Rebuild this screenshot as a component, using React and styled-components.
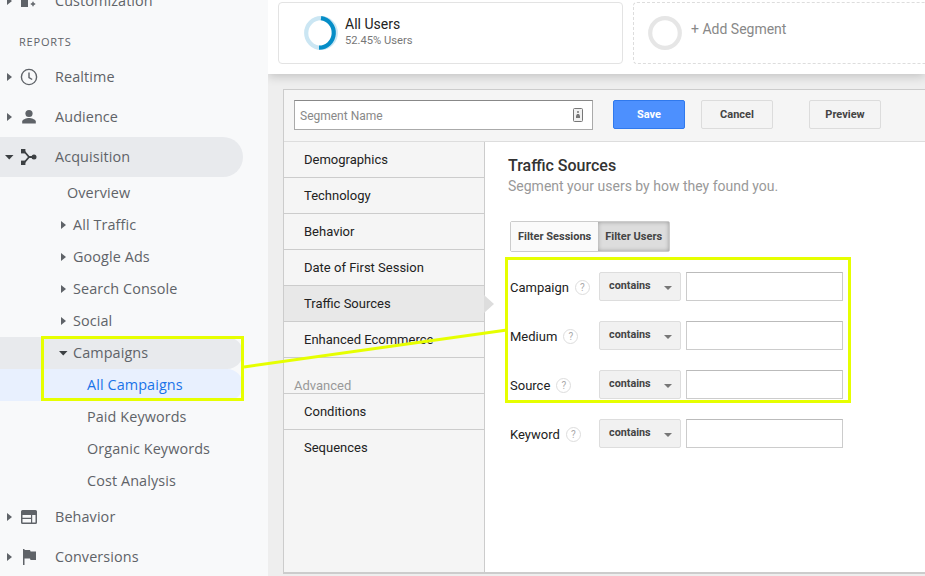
import React from 'react'
import styled, {createGlobalStyle} from 'styled-components'

const GlobalStyle = createGlobalStyle`
    html, body {
        margin: 0;
        padding: 0;
        height: 100%;
        overflow: hidden;
    }
    * {
        box-sizing: border-box;
    }
`

const Arrow = ({open}) => (
    <ArrowBox>
        <svg width="10" height="10" viewBox="0 0 10 10">
            {open
                ? <path d="M1 3h8.500L5.250 7.500z" fill="#3c4043"/>
                : <path d="M3 1l5 4-5 4z" fill="#5f6368"/>}
        </svg>
    </ArrowBox>
)

const ClockIcon = () => (
    <svg width="18" height="18" viewBox="0 0 18 18" fill="none" stroke="#5f6368" strokeWidth="1.4">
        <circle cx="9" cy="9" r="7.600"/>
        <path d="M9 4.500V9.500l3.200 2"/>
    </svg>
)

const PersonIcon = () => (
    <svg width="18" height="18" viewBox="0 0 18 18" fill="#5f6368">
        <circle cx="9" cy="5.500" r="3.600"/>
        <path d="M2.200 15.500v-2c0-2.400 4.500-3.600 6.800-3.600s6.800 1.200 6.800 3.600v2z"/>
    </svg>
)

const AcquisitionIcon = () => (
    <svg width="18" height="18" viewBox="0 0 18 18" fill="#3c4043" stroke="#3c4043" strokeWidth="1.800">
        <path d="M3.500 2.500L9 9l-5.500 6.500M9 9h6" fill="none"/>
        <rect x="1" y="1" width="4.400" height="4.400" strokeWidth="0"/>
        <rect x="1" y="12.600" width="4.400" height="4.400" strokeWidth="0"/>
        <circle cx="14" cy="9" r="2.500" strokeWidth="0"/>
    </svg>
)

const BehaviorIcon = () => (
    <svg width="18" height="18" viewBox="0 0 18 18">
        <path d="M2.500 2h13A1.500 1.500 0 0 1 17 3.500v11a1.500 1.500 0 0 1-1.500 1.500h-13A1.500 1.500 0 0 1 1 14.500v-11A1.500 1.500 0 0 1 2.500 2zM2.500 7v2.800h8.500V7zM12.200 7v7.500h3.300V7zM2.500 11v3.500h8.500V11z" fill="#5f6368" fillRule="evenodd"/>
    </svg>
)

const FlagIcon = () => (
    <svg width="18" height="18" viewBox="0 0 18 18" fill="#5f6368">
        <path d="M3 1h1.500v16H3zM4.500 2h5.500l.6 1.500H16v8.500H10.500L10 10.500H4.500z"/>
    </svg>
)

const CustomizationIcon = () => (
    <svg width="18" height="18" viewBox="0 0 18 18" fill="#5f6368">
        <rect x="1" y="8" width="7" height="7"/>
        <path d="M12.300 11.300v-1.500h1.400v1.500h1.500v1.400h-1.500v1.500h-1.400v-1.500h-1.500v-1.400z"/>
    </svg>
)

const DonutIcon = ({empty}) => (
    <svg width="34" height="34" viewBox="0 0 34 34" fill="none">
        <circle cx="17" cy="17" r="14.800" strokeWidth="4.200" stroke={empty ? '#e6e6e6' : '#cbe6f3'}/>
        {!empty && <path d="M17 2.200A14.800 14.800 0 0 1 15 31.660" strokeWidth="4.200" stroke="#058dc7"/>}
    </svg>
)

const mainItems = [
    {label: 'Overview', noArrow: true},
    {label: 'All Traffic'},
    {label: 'Google Ads'},
    {label: 'Search Console'},
    {label: 'Social'},
]

const campaignItems = ['Paid Keywords', 'Organic Keywords', 'Cost Analysis']

const filterRows = ['Campaign', 'Medium', 'Source', 'Keyword']

const menuTop = ['Demographics', 'Technology', 'Behavior', 'Date of First Session']

const App = () => {
    return(
        <Page>
            <GlobalStyle/>
            <Sidebar>
                <TopRow><Arrow/><IconSlot><CustomizationIcon/></IconSlot><RowLabel>Customization</RowLabel></TopRow>
                <SectionTitle>REPORTS</SectionTitle>
                <TopRow><Arrow/><IconSlot><ClockIcon/></IconSlot><RowLabel>Realtime</RowLabel></TopRow>
                <TopRow><Arrow/><IconSlot><PersonIcon/></IconSlot><RowLabel>Audience</RowLabel></TopRow>
                <TopRow active><Arrow open/><IconSlot><AcquisitionIcon/></IconSlot><RowLabel>Acquisition</RowLabel></TopRow>
                <SubList>
                    {mainItems.map(item => (
                        <SubRow key={item.label} plain={item.noArrow}>
                            {!item.noArrow && <Arrow/>}
                            <RowLabel>{item.label}</RowLabel>
                        </SubRow>
                    ))}
                    <SubRow open><Arrow open/><RowLabel>Campaigns</RowLabel></SubRow>
                    <LeafRow selected><RowLabel>All Campaigns</RowLabel></LeafRow>
                    {campaignItems.map(item => <LeafRow key={item}><RowLabel>{item}</RowLabel></LeafRow>)}
                </SubList>
                <TopRow><Arrow/><IconSlot><BehaviorIcon/></IconSlot><RowLabel>Behavior</RowLabel></TopRow>
                <TopRow><Arrow/><IconSlot><FlagIcon/></IconSlot><RowLabel>Conversions</RowLabel></TopRow>
            </Sidebar>
            <Main>
                <SegmentBar>
                    <SegmentCard>
                        <DonutIcon/>
                        <SegmentText>
                            <SegmentName>All Users</SegmentName>
                            <SegmentSub>52.45% Users</SegmentSub>
                        </SegmentText>
                    </SegmentCard>
                    <AddCard>
                        <DonutIcon empty/>
                        <AddLabel>+ Add Segment</AddLabel>
                    </AddCard>
                </SegmentBar>
                <Content>
                    <Panel>
                        <Toolbar>
                            <NameField>
                                <NamePlaceholder>Segment Name</NamePlaceholder>
                                <NameIcon>
                                    <svg width="10" height="14" viewBox="0 0 10 14">
                                        <rect x="0.500" y="0.500" width="9" height="13" rx="1" fill="#f1f1f1" stroke="#777"/>
                                        <path d="M5 3a1 1 0 1 1 0 2 1 1 0 0 1 0-2zM3 10V8l1-2h2l1 2v2z" fill="#777"/>
                                    </svg>
                                </NameIcon>
                            </NameField>
                            <SaveButton>Save</SaveButton>
                            <ToolButton>Cancel</ToolButton>
                            <PreviewButton>Preview</PreviewButton>
                        </Toolbar>
                        <PanelBody>
                            <Menu>
                                {menuTop.map(item => <MenuItem key={item}>{item}</MenuItem>)}
                                <MenuItem selected>Traffic Sources</MenuItem>
                                <MenuItem>Enhanced Ecommerce</MenuItem>
                                <MenuHeading>Advanced</MenuHeading>
                                <MenuItem>Conditions</MenuItem>
                                <LastMenuItem>Sequences</LastMenuItem>
                            </Menu>
                            <Form>
                                <FormTitle>Traffic Sources</FormTitle>
                                <FormSub>Segment your users by how they found you.</FormSub>
                                <Toggle>
                                    <ToggleButton>Filter Sessions</ToggleButton>
                                    <ToggleButton pressed>Filter Users</ToggleButton>
                                </Toggle>
                                <Rows>
                                    {filterRows.map(row => (
                                        <Row key={row}>
                                            <RowName>
                                                {row}
                                                <Help>?</Help>
                                            </RowName>
                                            <Select>
                                                contains
                                                <Caret/>
                                            </Select>
                                            <ValueInput/>
                                        </Row>
                                    ))}
                                </Rows>
                            </Form>
                        </PanelBody>
                    </Panel>
                </Content>
            </Main>
            <CampaignBox/>
            <FilterBox/>
            <Connector viewBox="0 0 925 576" width="925" height="576">
                <line x1="244" y1="367" x2="507" y2="330" stroke="#e6ff00" strokeWidth="3"/>
            </Connector>
        </Page>
    )
}

export default App

const sans = `"Open Sans", "Noto Sans", sans-serif`
const roboto = `Roboto, "Liberation Sans", sans-serif`

const Page = styled.div`
    position: relative;
    display: flex;
    width: 925px;
    height: 576px;
    overflow: hidden;
    background: #fff;
`

const Sidebar = styled.nav`
    flex: 0 0 268px;
    margin-top: -19px;
    background: #f8f9fa;
    font-family: ${sans};
    color: #5f6368;
`

const TopRow = styled.div`
    display: flex;
    align-items: center;
    width: 243px;
    height: 40px;
    padding-left: 4px;
    border-radius: 0 20px 20px 0;
    background: ${props => props.active ? '#e8eaed' : 'transparent'};
`

const ArrowBox = styled.span`
    display: flex;
    flex: 0 0 10px;
    align-items: center;
    justify-content: center;
`

const IconSlot = styled.span`
    display: flex;
    flex: 0 0 18px;
    margin: 0 17px 0 6px;
`

const RowLabel = styled.span`
    padding-bottom: 2px;
    font-size: 14.400px;
    font-weight: 500;
    letter-spacing: .1px;
    white-space: nowrap;
`

const SectionTitle = styled.div`
    height: 36px;
    padding: 15px 0 0 19px;
    font-size: 11px;
    font-weight: 500;
    letter-spacing: .8px;
    line-height: 12px;
`

const SubList = styled.div`
    display: flex;
    flex-direction: column;
`

const SubRow = styled.div`
    display: flex;
    align-items: center;
    gap: 5px;
    width: 243px;
    height: 32px;
    padding-left: ${props => props.plain ? '67px' : '58px'};
    border-radius: 0 16px 16px 0;
    background: ${props => props.open ? '#e8eaed' : 'transparent'};
`

const LeafRow = styled.div`
    display: flex;
    align-items: center;
    width: 243px;
    height: 32px;
    padding-left: 87px;
    border-radius: 0 16px 16px 0;
    background: ${props => props.selected ? '#e8f0fe' : 'transparent'};
    color: ${props => props.selected ? '#1a73e8' : '#5f6368'};
`

const Main = styled.div`
    display: flex;
    flex: 1;
    flex-direction: column;
    min-width: 0;
    overflow: hidden;
    font-family: ${roboto};
`

const SegmentBar = styled.div`
    position: relative;
    z-index: 1;
    display: flex;
    gap: 10px;
    flex: 0 0 74px;
    padding: 2px 0 0 10px;
    background: #fff;
    box-shadow: 0 2px 10px rgba(0, 0, 0, .2);
`

const SegmentCard = styled.div`
    display: flex;
    align-items: center;
    flex: 0 0 345px;
    gap: 7px;
    height: 62px;
    padding-left: 25px;
    border: 1px solid #e3e3e3;
    border-radius: 4px;
`

const AddCard = styled(SegmentCard)`
    flex: 1;
    padding-left: 14px;
    border: 1px dashed #ddd;
    border-right: none;
    border-radius: 4px 0 0 4px;
`

const SegmentText = styled.div`
    display: flex;
    flex-direction: column;
    margin-top: -2px;
`

const SegmentName = styled.span`
    color: #222;
    font-size: 14px;
    line-height: 17px;
`

const SegmentSub = styled.span`
    color: #777;
    font-size: 11.200px;
    line-height: 15px;
`

const AddLabel = styled.span`
    margin: -8px 0 0 2px;
    color: #888;
    font-size: 14px;
`

const Content = styled.div`
    flex: 1;
    padding: 15px 0 2px 15px;
    background: #eee;
`

const Panel = styled.div`
    display: flex;
    flex-direction: column;
    height: 100%;
    border: 1px solid #ccc;
    border-right: none;
    border-bottom-width: 2px;
    background: #f5f5f5;
`

const Toolbar = styled.div`
    display: flex;
    align-items: center;
    flex: 0 0 52px;
    padding: 0 0 2px 10px;
    border-bottom: 1px solid #ddd;
`

const NameField = styled.div`
    display: flex;
    align-items: center;
    justify-content: space-between;
    width: 299px;
    height: 30px;
    padding: 1px 9px 0 5px;
    border: 1px solid #aaa;
    border-top-color: #888;
    background: #fff;
`

const NamePlaceholder = styled.span`
    padding-top: 1px;
    color: #888;
    font-size: 12px;
`

const NameIcon = styled.span`
    display: flex;
`

const ToolButton = styled.button`
    width: 72px;
    height: 29px;
    margin-left: 16px;
    padding: 0;
    border: 1px solid #dcdcdc;
    border-radius: 2px;
    background: #f4f4f4;
    color: #444;
    font-family: ${roboto};
    font-size: 11px;
    font-weight: 700;
`

const SaveButton = styled(ToolButton)`
    margin-left: 20px;
    border-color: #3079ed;
    background: #4d90fe;
    color: #fff;
`

const PreviewButton = styled(ToolButton)`
    margin-left: 36px;
`

const PanelBody = styled.div`
    display: flex;
    flex: 1;
    min-height: 0;
`

const Menu = styled.div`
    flex: 0 0 201px;
    border-right: 1px solid #ccc;
`

const MenuItem = styled.div`
    position: relative;
    display: flex;
    align-items: center;
    height: 36px;
    padding-left: 20px;
    border-bottom: 1px solid #ccc;
    background: ${props => props.selected ? '#e8e8e8' : 'transparent'};
    color: #222;
    font-size: 13px;

    ${props => props.selected && `
        &::after {
            content: '';
            position: absolute;
            top: 9px;
            right: -10px;
            width: 0;
            height: 0;
            border-top: 9px solid transparent;
            border-bottom: 9px solid transparent;
            border-left: 10px solid #ddd;
        }
    `}
`

const LastMenuItem = styled(MenuItem)`
    border-bottom-color: transparent;
`

const MenuHeading = styled.div`
    height: 36px;
    padding: 20px 0 0 10px;
    border-bottom: 1px solid #ccc;
    color: #999;
    font-size: 13px;
    line-height: 15px;
`

const Form = styled.div`
    flex: 1;
    padding: 14px 0 0 23px;
    background: #fff;
`

const FormTitle = styled.div`
    color: #333;
    font-size: 16px;
    font-weight: 500;
    line-height: 20px;
`

const FormSub = styled.div`
    margin-top: 2px;
    color: #999;
    font-size: 14px;
    line-height: 17px;
`

const Toggle = styled.div`
    display: inline-flex;
    height: 31px;
    margin: 26px 0 0 2px;
    border: 1px solid #ccc;
    border-radius: 2px;
`

const ToggleButton = styled.div`
    display: flex;
    align-items: center;
    padding: 0 7px;
    background: ${props => props.pressed ? '#ddd' : '#fafafa'};
    box-shadow: ${props => props.pressed ? 'inset 0 0 4px rgba(0, 0, 0, .3)' : 'none'};
    color: #444;
    font-size: 11px;
    font-weight: 700;
`

const Rows = styled.div`
    display: flex;
    flex-direction: column;
    gap: 20px;
    margin-top: 20px;
    margin-left: 2px;
`

const Row = styled.div`
    display: flex;
    align-items: center;
    height: 29px;
`

const RowName = styled.div`
    display: flex;
    align-items: center;
    gap: 6px;
    width: 89px;
    padding-top: 2px;
    color: #222;
    font-size: 13px;
`

const Help = styled.span`
    display: flex;
    flex: 0 0 15px;
    align-items: center;
    justify-content: center;
    height: 15px;
    border: 1px solid #ddd;
    border-radius: 50%;
    color: #aaa;
    font-size: 10px;
`

const Select = styled.div`
    position: relative;
    width: 82px;
    height: 29px;
    padding: 6px 0 0 9px;
    border: 1px solid #ddd;
    border-radius: 2px;
    background: #f1f1f1;
    color: #444;
    font-size: 10.800px;
    font-weight: 700;
    line-height: 13px;
`

const Caret = styled.span`
    position: absolute;
    top: 13px;
    right: 8px;
    border-top: 4px solid #777;
    border-left: 4px solid transparent;
    border-right: 4px solid transparent;
`

const ValueInput = styled.div`
    width: 157px;
    height: 29px;
    margin-left: 5px;
    border: 1px solid #ccc;
    border-top-color: #bbb;
    background: #fff;
`

const CampaignBox = styled.div`
    position: absolute;
    left: 41px;
    top: 336px;
    width: 203px;
    height: 65px;
    border: 3px solid #e6ff00;
    pointer-events: none;
`

const FilterBox = styled.div`
    position: absolute;
    left: 505px;
    top: 257px;
    width: 346px;
    height: 146px;
    border: 3px solid #e6ff00;
    pointer-events: none;
`

const Connector = styled.svg`
    position: absolute;
    left: 0;
    top: 0;
    pointer-events: none;
`
